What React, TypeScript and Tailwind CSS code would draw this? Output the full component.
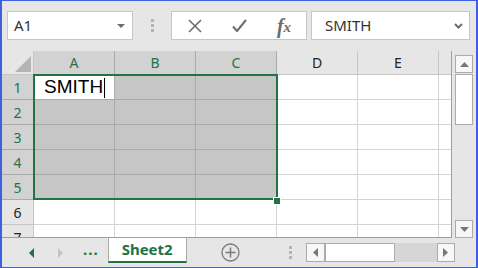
import React from 'react'

const COLS = ['A', 'B', 'C', 'D', 'E']
const ROWS = [1, 2, 3, 4, 5, 6, 7]

function Tri({ dir, color, w = 9, h = 5 }: { dir: 'up' | 'down' | 'left' | 'right'; color: string; w?: number; h?: number }) {
  const pts =
    dir === 'up'
      ? `0,${h} ${w / 2},0 ${w},${h}`
      : dir === 'down'
      ? `0,0 ${w},0 ${w / 2},${h}`
      : dir === 'left'
      ? `${w},0 ${w},${h} 0,${h / 2}`
      : `0,0 0,${h} ${w},${h / 2}`
  return (
    <svg width={w} height={h} viewBox={`0 0 ${w} ${h}`} className="block">
      <polygon points={pts} fill={color} />
    </svg>
  )
}

function Dots() {
  return (
    <div className="flex flex-col gap-[2px]">
      <div className="w-[3px] h-[3px] bg-[#b3b3b3]" />
      <div className="w-[3px] h-[3px] bg-[#b3b3b3]" />
      <div className="w-[3px] h-[3px] bg-[#b3b3b3]" />
    </div>
  )
}

function HeaderRow() {
  return (
    <div className="flex h-[24px] shrink-0">
      <div className="relative w-[32px] shrink-0 bg-[#e6e6e6] border-r border-b border-[#c6c6c6]">
        <svg width="16" height="16" viewBox="0 0 16 16" className="absolute right-[2px] bottom-[2px]">
          <polygon points="16,0 16,16 0,16" fill="#b4b4b4" />
        </svg>
      </div>
      {COLS.map((c, i) => {
        const sel = i < 3
        return (
          <div
            key={c}
            className={`w-[81px] shrink-0 flex items-center justify-center border-r border-b text-[14px] ${
              sel ? 'bg-[#d2d2d2] text-[#217346] border-[#ababab]' : 'bg-[#e6e6e6] text-[#222222] border-[#c6c6c6]'
            }`}
          >
            {c}
          </div>
        )
      })}
      <div className="w-[12px] shrink-0 bg-[#e6e6e6] border-b border-[#c6c6c6]" />
    </div>
  )
}

function Row({ n }: { n: number }) {
  const selRow = n <= 5
  return (
    <div className="flex h-[25px] shrink-0">
      <div
        className={`w-[32px] shrink-0 flex items-center justify-center border-r border-b text-[14px] ${
          selRow ? 'bg-[#d2d2d2] text-[#217346] border-[#ababab]' : 'bg-[#e6e6e6] text-[#222222] border-[#c6c6c6]'
        }`}
      >
        {n}
      </div>
      {COLS.map((c, i) => {
        const sel = selRow && i < 3
        const active = n === 1 && i === 0
        return (
          <div
            key={c}
            className={`w-[81px] shrink-0 border-r border-b flex items-center ${
              active ? 'bg-white border-[#ababab]' : sel ? 'bg-[#c6c6c6] border-[#ababab]' : 'bg-white border-[#d4d4d4]'
            }`}
          >
            {active && (
              <div className="pl-[10px] pt-[1px] flex items-center text-[19px] text-black [font-family:'Liberation_Sans',Arial,sans-serif]">
                SMITH
                <span className="inline-block w-px h-[20px] bg-black ml-[1px]" />
              </div>
            )}
          </div>
        )
      })}
      <div className="w-[12px] shrink-0 bg-white border-b border-[#d4d4d4]" />
    </div>
  )
}

export default function App() {
  return (
    <div className="w-[478px] h-[268px] flex flex-col overflow-hidden bg-[#e6e6e6] border-t border-b border-l-2 border-r-2 border-[#3f5fdf] [font-family:'Noto_Sans','Open_Sans',sans-serif]">
      {/* formula bar */}
      <div className="h-[50px] shrink-0 flex items-start pt-[10px] pl-[5px]">
        <div className="w-[126px] h-[29px] bg-white border border-[#c6c6c6] flex items-center justify-between pl-[6px] pr-[7px]">
          <span className="text-[15px] text-[#333333]">A1</span>
          <Tri dir="down" color="#6d6d6d" w={8} h={4} />
        </div>
        <div className="w-[38px] h-[29px] flex items-center justify-center">
          <Dots />
        </div>
        <div className="w-[136px] h-[29px] bg-white border border-[#c6c6c6] flex items-center">
          <div className="w-[45px] flex justify-center">
            <svg width="14" height="14" viewBox="0 0 14 14">
              <path d="M1 1 L13 13 M13 1 L1 13" stroke="#6d6d6d" strokeWidth="1.6" fill="none" />
            </svg>
          </div>
          <div className="w-[45px] flex justify-center">
            <svg width="15" height="13" viewBox="0 0 15 13">
              <path d="M1 7.5 L5 12 L14 1" stroke="#6d6d6d" strokeWidth="2" fill="none" strokeLinejoin="round" />
            </svg>
          </div>
          <div className="w-[44px] flex justify-center items-center text-[#6d6d6d] italic font-bold [font-family:'Liberation_Serif','Times_New_Roman',serif]">
            <span className="text-[20px] leading-none">f</span>
            <span className="text-[15px] leading-none mt-[4px]">x</span>
          </div>
        </div>
        <div className="ml-[4px] w-[159px] h-[29px] bg-white border border-[#c6c6c6] flex items-center justify-between pl-[13px] pr-[6px]">
          <span className="text-[15px] text-[#333333]">SMITH</span>
          <svg width="9" height="6" viewBox="0 0 9 6">
            <path d="M1 1 L4.5 4.5 L8 1" stroke="#6d6d6d" strokeWidth="2" fill="none" />
          </svg>
        </div>
      </div>

      {/* grid + vertical scrollbar */}
      <div className="h-[187px] shrink-0 flex">
        <div className="relative w-[450px] h-[187px] overflow-hidden bg-white border-r border-b border-[#9e9e9e] flex flex-col">
          <HeaderRow />
          {ROWS.map((n) => (
            <Row key={n} n={n} />
          ))}
          <div className="absolute left-[31px] top-[23px] w-[245px] h-[126px] border-2 border-[#217346] pointer-events-none" />
          <div className="absolute left-[271px] top-[146px] w-[8px] h-[8px] bg-[#217346] border border-white" />
        </div>
        <div className="w-[24px] h-[187px] flex flex-col items-center pt-[4px]">
          <div className="w-[18px] h-[18px] bg-[#f7f7f7] border border-[#ababab] flex items-center justify-center">
            <Tri dir="up" color="#777777" />
          </div>
          <div className="w-[18px] h-[51px] bg-white border border-[#ababab] mt-[1px]" />
          <div className="mt-auto w-[18px] h-[18px] bg-[#f7f7f7] border border-[#ababab] flex items-center justify-center">
            <Tri dir="down" color="#777777" />
          </div>
        </div>
      </div>

      {/* sheet tabs */}
      <div className="h-[29px] shrink-0 flex items-center">
        <div className="ml-[27px]">
          <Tri dir="left" color="#217346" w={5} h={10} />
        </div>
        <div className="ml-[24px]">
          <Tri dir="right" color="#c3c3c3" w={5} h={10} />
        </div>
        <div className="ml-[20px] mb-[6px] text-[#217346] text-[15px] font-bold tracking-[1px] leading-none">...</div>
        <div className="self-start ml-[9px] w-[79px] h-[25px] bg-white border-x border-[#ababab] border-b-2 border-b-[#217346] flex items-center justify-center text-[15px] font-bold text-[#217346]">
          Sheet2
        </div>
        <div className="ml-[34px]">
          <svg width="19" height="19" viewBox="0 0 19 19" className="block">
            <circle cx="9.5" cy="9.5" r="8.5" stroke="#7a7a7a" strokeWidth="1.3" fill="none" />
            <path d="M9.5 4.5 V14.5 M4.5 9.5 H14.5" stroke="#7a7a7a" strokeWidth="1.5" />
          </svg>
        </div>
        <div className="ml-[49px]">
          <Dots />
        </div>
        <div className="ml-[14px] flex h-[19px]">
          <div className="w-[19px] h-[19px] bg-[#f7f7f7] border border-[#ababab] flex items-center justify-center">
            <Tri dir="left" color="#777777" w={5} h={9} />
          </div>
          <div className="w-[70px] h-[19px] bg-white border border-[#ababab]" />
          <div className="w-[42px] h-[19px] bg-[#d6d6d6]" />
          <div className="w-[18px] h-[19px] bg-[#f7f7f7] border border-[#ababab] flex items-center justify-center">
            <Tri dir="right" color="#777777" w={5} h={9} />
          </div>
        </div>
      </div>
    </div>
  )
}
